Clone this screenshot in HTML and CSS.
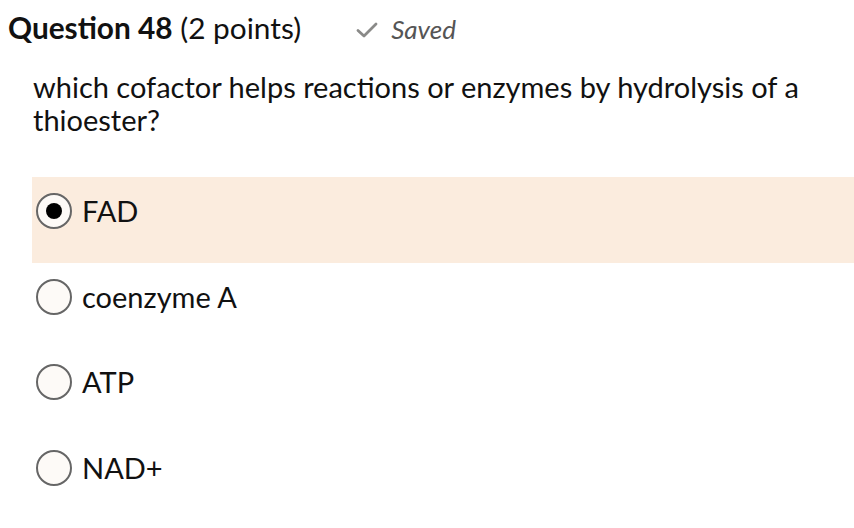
FILE: index.html
```html
<!DOCTYPE html>
<html>
<head>
<meta charset="utf-8">
<link rel="stylesheet" href="styles.css">
</head>
<body>
<div class="question">
  <div class="header">
    <h2 class="title"><strong>Question 48</strong> <span class="pts">(2 points)</span></h2>
    <div class="saved">
      <svg class="check" width="22" height="18" viewBox="0 0 22 18"><path d="M2 9.5 L8 15 L20 3" fill="none" stroke="#8a8a88" stroke-width="2.8" stroke-linecap="round" stroke-linejoin="round"/></svg>
      <span>Saved</span>
    </div>
  </div>
  <p class="prompt">which cofactor helps reactions or enzymes by hydrolysis of a thioester?</p>
  <ul class="options">
    <li class="option selected"><span class="radio"><span class="dot"></span></span><span class="label">FAD</span></li>
    <li class="option"><span class="radio"></span><span class="label">coenzyme A</span></li>
    <li class="option"><span class="radio"></span><span class="label">ATP</span></li>
    <li class="option"><span class="radio"></span><span class="label">NAD+</span></li>
  </ul>
</div>
</body>
</html>
```
FILE: styles.css
```css
* { box-sizing: border-box; }
html, body { margin: 0; padding: 0; background: #fff; }
body { font-family: Lato, "Liberation Sans", sans-serif; color: #111; }
.question { padding: 11px 0 0 8px; }
.header { display: flex; align-items: baseline; gap: 55px; line-height: 34px; }
.title { margin: 0; font-size: 29.8px; font-weight: 400; color: #111; line-height: 34px; }
.title strong { font-weight: 700; }
.saved { display: flex; align-items: baseline; gap: 13px; color: #555; font-style: italic; font-size: 26px; }
.check { align-self: center; position: relative; top: 1px; }
.prompt { margin: 24px 40px 0 25px; font-size: 29px; line-height: 33px; }
.options { list-style: none; margin: 41px 0 0 24px; padding: 0; }
.option { display: flex; align-items: flex-start; gap: 10px; height: 85.7px; padding: 16px 0 0 4px; font-size: 29px; }
.option.selected { background: #fbecde; }
.radio { flex: none; width: 36px; height: 36px; border-radius: 50%; border: 2px solid #666; background: #fdfaf7; display: flex; align-items: center; justify-content: center; }
.dot { width: 16px; height: 16px; border-radius: 50%; background: #000; }
.label { line-height: 36px; }
```
